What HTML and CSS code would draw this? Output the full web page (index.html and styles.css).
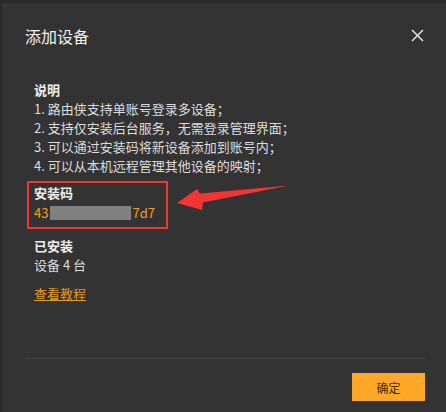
FILE: index.html
```html
<!DOCTYPE html>
<html lang="zh-CN">
<head>
<meta charset="utf-8">
<title>添加设备</title>
<link rel="stylesheet" href="styles.css">
</head>
<body>
<div class="dialog">
  <div class="header">
    <div class="title">添加设备</div>
    <svg class="close" width="13" height="13" viewBox="0 0 13 13"><path d="M1 1 L12 12 M12 1 L1 12" stroke="#e6e6e6" stroke-width="1.5" fill="none"/></svg>
  </div>
  <div class="content">
    <div class="section">
      <div class="label">说明</div>
      <div class="line">1. 路由侠支持单账号登录多设备；</div>
      <div class="line">2. 支持仅安装后台服务，无需登录管理界面；</div>
      <div class="line">3. 可以通过安装码将新设备添加到账号内；</div>
      <div class="line">4. 可以从本机远程管理其他设备的映射；</div>
    </div>
    <div class="codebox">
      <div class="label">安装码</div>
      <div class="code"><span>43</span><span class="mask"></span><span>7d7</span></div>
    </div>
    <div class="section installed">
      <div class="label">已安装</div>
      <div class="line">设备 4 台</div>
    </div>
    <div class="section">
      <a class="link" href="#">查看教程</a>
    </div>
  </div>
  <div class="footer">
    <button class="ok">确定</button>
  </div>
  <svg class="arrow" width="446" height="412" viewBox="0 0 446 412"><polygon points="177,203 197,189 200,193.5 289,185.5 203,202.5 202,210" fill="#f23434"/></svg>
</div>
</body>
</html>
```
FILE: styles.css
```css
html, body {
  margin: 0;
  padding: 0;
}
body {
  background: #2a2a2a;
  font-family: "Noto Sans CJK SC", "Noto Sans", sans-serif;
  width: 446px;
  height: 412px;
  overflow: hidden;
}
.dialog {
  position: relative;
  margin: 3px 0 0 2px;
  height: 409px;
  background: #333333;
  display: flex;
  flex-direction: column;
}
.header {
  display: flex;
  justify-content: space-between;
  align-items: center;
  padding: 21px 22px 0 23px;
  height: 24px;
}
.title {
  font-size: 16px;
  line-height: 24px;
  color: #f2f2f2;
}
.close {
  display: block;
  margin-top: -2px;
}
.content {
  padding: 32px 0 0 25px;
  flex: 1;
  font-size: 13px;
  line-height: 19px;
  color: #dcdcdc;
}
.section {
  padding-left: 7px;
}
.label {
  font-weight: bold;
  color: #eeeeee;
}
.codebox {
  margin-top: 6px;
  width: 132px;
  border: 2px solid #f23434;
  padding: 0 0 5px 5px;
}
.code {
  margin-top: 1px;
  color: #f0a020;
  display: flex;
  align-items: center;
}
.mask {
  display: inline-block;
  width: 81px;
  height: 14px;
  background: #808080;
  margin: 0 1px 0 2px;
}
.installed {
  margin-top: 7px;
}
.link {
  display: inline-block;
  margin-top: 10px;
  color: #e39a1e;
  text-decoration: underline;
}
.footer {
  margin: 0 21px 11px 23px;
  border-top: 1px solid #404040;
  padding-top: 14px;
  display: flex;
  justify-content: flex-end;
}
.ok {
  width: 73px;
  height: 28px;
  border: none;
  background: #ffa726;
  color: #3a2a10;
  font-family: "Noto Sans CJK SC", sans-serif;
  font-size: 12px;
  padding: 0;
}
.arrow {
  position: absolute;
  left: -2px;
  top: -3px;
  pointer-events: none;
}
```
